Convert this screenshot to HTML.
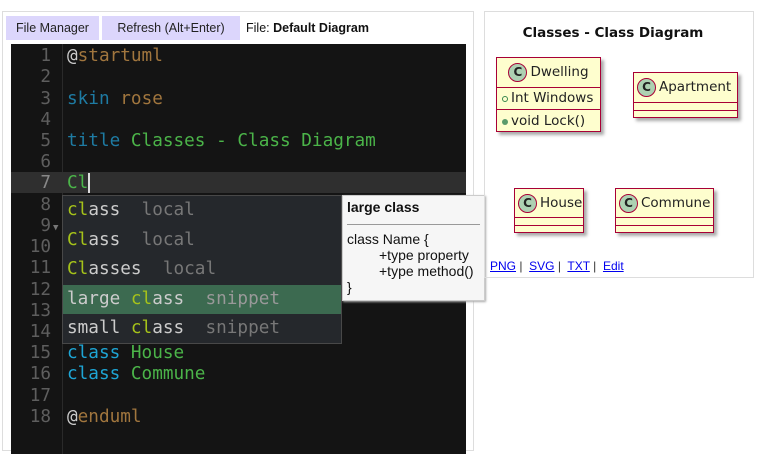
<!DOCTYPE html>
<html><head><style>
*{margin:0;padding:0;box-sizing:border-box}
body{width:768px;height:443px;overflow:hidden;background:#fff;font-family:"Liberation Sans",sans-serif;position:relative}
.abs{position:absolute}
.btn{position:absolute;top:16px;height:24px;background:#dcd6fc;font-size:12.5px;color:#222;text-align:center;line-height:24px}
.ed{position:absolute;left:11px;top:44px;width:455px;height:410px;background:#141414;font-family:"DejaVu Sans Mono",monospace;font-size:17.7px}
.gut{position:absolute;left:0;top:0;width:52px;height:410px;background:#141414;border-right:1px solid #2a2a2a}
.ln{position:absolute;left:0;width:40px;text-align:right;color:#5e5e5e;height:21.2px;line-height:21.2px}
.cl{position:absolute;left:56px;height:21.2px;line-height:21.2px;white-space:pre}
.kw{color:#1e7ba3}.st{color:#a1763e}.gr{color:#4bb449}.at{color:#ccc}.cy{color:#1ea5d4}
.pop{position:absolute;left:62px;top:195px;width:280px;height:149px;background:#25282c;border:1px solid #484848;font-family:"DejaVu Sans Mono",monospace;font-size:17.7px}
.it{height:29.5px;line-height:29.5px;padding-left:4px;color:#ccc;white-space:pre}
.m{color:#a5c21a}.d{color:#777}
.box{position:absolute;background:#fefece;border:1px solid #a80036;box-shadow:3px 3px 3px #aaa;font-family:"DejaVu Sans",sans-serif;font-size:13.5px;color:#222}
.c{display:inline-block;width:19px;height:19px;border-radius:50%;background:#add1b2;border:1px solid #a80036;text-align:center;line-height:17px;font-weight:bold;font-size:12px;vertical-align:middle;margin-right:3px}
a{color:#00e;font-size:12px;text-decoration:underline}
</style></head><body>
<div class="abs" style="left:2px;top:11px;width:472px;height:440px;border:1px solid #ddd"></div>
<div class="btn" style="left:6px;width:93px">File Manager</div>
<div class="btn" style="left:102px;width:138px">Refresh (Alt+Enter)</div>
<div class="abs" style="left:246px;top:21px;font-size:12.5px;color:#111">File: <b>Default Diagram</b></div>
<div class="ed">
<div class="gut"></div>
<div class="abs" style="left:0;top:128px;width:455px;height:21px;background:#2f2f2f"></div>
<div class="ln" style="top:2px">1</div><div class="ln" style="top:23px">2</div><div class="ln" style="top:45px">3</div><div class="ln" style="top:66px">4</div><div class="ln" style="top:87px">5</div><div class="ln" style="top:108px">6</div><div class="ln" style="top:129px;color:#888">7</div><div class="ln" style="top:151px">8</div><div class="ln" style="top:172px">9</div><div class="abs" style="left:42px;top:179px;color:#777;font-size:9px">▼</div><div class="ln" style="top:193px">10</div><div class="ln" style="top:214px">11</div><div class="ln" style="top:236px">12</div><div class="ln" style="top:257px">13</div><div class="ln" style="top:278px">14</div><div class="ln" style="top:299px">15</div><div class="ln" style="top:320px">16</div><div class="ln" style="top:342px">17</div><div class="ln" style="top:363px">18</div>
<div class="cl" style="top:2px"><span class="at">@</span><span class="st">startuml</span></div>
<div class="cl" style="top:45px"><span class="kw">skin</span> <span class="st">rose</span></div>
<div class="cl" style="top:87px"><span class="kw">title</span> <span class="gr">Classes - Class Diagram</span></div>
<div class="cl" style="top:129px"><span class="gr">Cl</span><span style="display:inline-block;width:2px;height:20px;background:#ddd;vertical-align:middle"></span></div>
<div class="cl" style="top:299px"><span class="cy">class</span> <span class="gr">House</span></div>
<div class="cl" style="top:320px"><span class="cy">class</span> <span class="gr">Commune</span></div>
<div class="cl" style="top:363px"><span class="at">@</span><span class="st">enduml</span></div>
</div>
<div class="pop">
<div class="it"><span class="m">cl</span>ass  <span class="d">local</span></div>
<div class="it"><span class="m">Cl</span>ass  <span class="d">local</span></div>
<div class="it"><span class="m">Cl</span>asses  <span class="d">local</span></div>
<div class="it" style="background:#3c6a50">large <span class="m">cl</span>ass  <span class="d" style="color:#999">snippet</span></div>
<div class="it">small <span class="m">cl</span>ass  <span class="d">snippet</span></div>
</div>
<div class="abs" style="left:342px;top:195px;width:143px;height:106px;background:#f6f6f6;border:1px solid #ccc;font-size:14px;color:#111;padding:3px 4px;box-shadow:1px 1px 2px #aaa">
<div style="font-weight:bold;height:20px">large class</div>
<div style="border-top:1px solid #999;margin:5px 0 6px"></div>
<div style="line-height:16px">class Name {<br><span style="padding-left:32px">+type property</span><br><span style="padding-left:32px">+type method()</span><br>}</div>
</div>
<div class="abs" style="left:484px;top:11px;width:270px;height:267px;border:1px solid #ddd"></div>
<div class="abs" style="left:484px;top:25px;width:258px;text-align:center;font-family:'DejaVu Sans',sans-serif;font-weight:bold;font-size:13.5px;color:#111">Classes - Class Diagram</div>
<div class="box" style="left:496px;top:57px;width:105px;height:75px">
<div style="height:30px;line-height:29px;text-align:center;border-bottom:1px solid #a80036"><span class="c">C</span>Dwelling</div>
<div style="height:22px;line-height:21px;border-bottom:1px solid #a80036;padding-left:5px;white-space:nowrap"><span style="display:inline-block;width:6px;height:6px;border:1px solid #38874d;border-radius:50%;margin-right:3px"></span>Int Windows</div>
<div style="line-height:22px;padding-left:5px"><span style="display:inline-block;width:6px;height:6px;background:#5a9a6a;border-radius:50%;margin-right:3px"></span>void Lock()</div>
</div>
<div class="box" style="left:633px;top:72px;width:105px;height:46px">
<div style="height:30px;line-height:29px;padding-left:3px;border-bottom:1px solid #a80036;white-space:nowrap"><span class="c">C</span>Apartment</div>
<div style="height:8px;border-bottom:1px solid #a80036"></div></div>
<div class="box" style="left:514px;top:188px;width:70px;height:45px">
<div style="height:29px;line-height:28px;padding-left:3px;border-bottom:1px solid #a80036"><span class="c">C</span>House</div>
<div style="height:8px;border-bottom:1px solid #a80036"></div></div>
<div class="box" style="left:615px;top:188px;width:99px;height:45px">
<div style="height:29px;line-height:28px;padding-left:3px;border-bottom:1px solid #a80036;white-space:nowrap"><span class="c">C</span>Commune</div>
<div style="height:8px;border-bottom:1px solid #a80036"></div></div>
<div class="abs" style="left:490px;top:259px;font-size:12px;color:#333"><a>PNG</a> |&nbsp; <a>SVG</a> |&nbsp; <a>TXT</a> |&nbsp; <a>Edit</a></div>
</body></html>
